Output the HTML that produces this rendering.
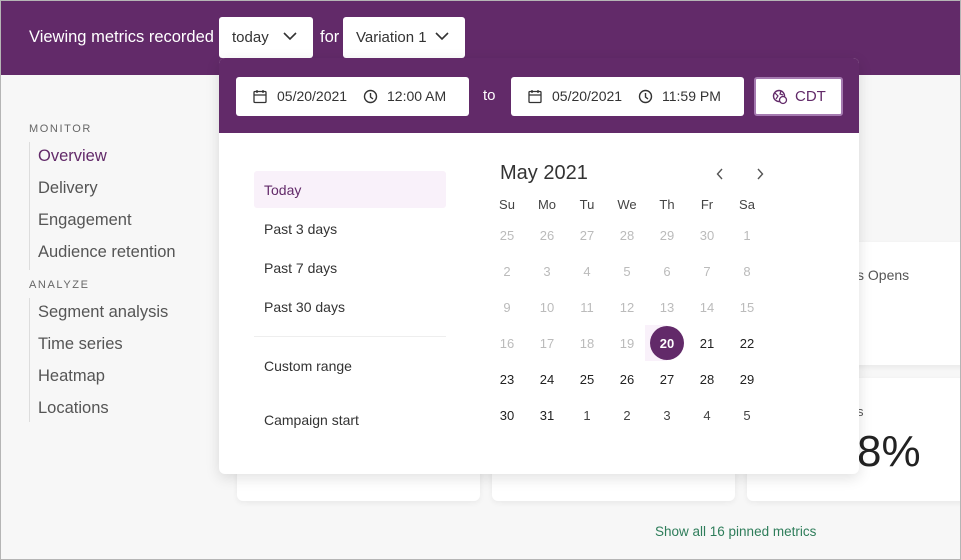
<!DOCTYPE html>
<html><head><style>
*{box-sizing:border-box;margin:0;padding:0}
body{width:961px;height:560px;overflow:hidden;font-family:"Liberation Sans",sans-serif;background:#f7f7f7;position:relative;color:#222}
.frame{position:absolute;inset:0;border:1px solid #b5b5b5;z-index:20;pointer-events:none}
.top{position:absolute;left:0;top:0;width:961px;height:75px;background:#622a69}
.abs{position:absolute}
.t{font-size:16.5px;color:#fff}
.sel{position:absolute;background:#fff;border-radius:3px;height:41px;top:17px;font-size:15px;color:#333;display:flex;align-items:center;padding-left:13px}
.sel svg{position:absolute;right:16px;top:15px}
.side .h{position:absolute;left:29px;font-size:11px;letter-spacing:1.6px;color:#666}
.side .g{position:absolute;left:29px;border-left:1px solid #ddd}
.side .i{position:absolute;left:38px;font-size:16.5px;color:#555}
.card{position:absolute;background:#fff;border-radius:6px;box-shadow:0 2px 6px rgba(0,0,0,.06)}
.pop{position:absolute;left:219px;top:58px;width:640px;height:416px;background:#fff;border-radius:6px;box-shadow:0 4px 14px rgba(0,0,0,.12);overflow:hidden}
.pp{position:absolute;left:0;top:0;width:640px;height:75px;background:#622a69}
.dbox{position:absolute;top:19px;height:39px;background:#fff;border-radius:3px;font-size:14px;color:#333}
.dbox span{position:absolute;top:11px}
.li{position:absolute;left:45px;font-size:14px;color:#333}
.d{position:absolute;width:36px;text-align:center;font-size:13px;color:#222}
.g2{color:#bbb}
.wd{position:absolute;width:36px;text-align:center;font-size:13px;color:#444;top:139px}
</style></head><body>
<div class="top"></div>
<div class="abs t" style="left:29px;top:28px">Viewing metrics recorded</div>
<div class="sel" style="left:219px;width:94px">today<svg width="14" height="9" viewBox="0 0 14 9"><path d="M1 1l6 6 6-6" fill="none" stroke="#333" stroke-width="1.6"/></svg></div>
<div class="abs t" style="left:320px;top:28px">for</div>
<div class="sel" style="left:343px;width:122px">Variation 1<svg width="14" height="9" viewBox="0 0 14 9"><path d="M1 1l6 6 6-6" fill="none" stroke="#333" stroke-width="1.6"/></svg></div>

<div class="side">
<div class="h" style="top:123px">MONITOR</div>
<div class="g" style="top:142px;height:128px"></div>
<div class="i" style="top:147px;color:#622a69">Overview</div>
<div class="i" style="top:179px">Delivery</div>
<div class="i" style="top:211px">Engagement</div>
<div class="i" style="top:243px">Audience retention</div>
<div class="h" style="top:279px">ANALYZE</div>
<div class="g" style="top:298px;height:124px"></div>
<div class="i" style="top:303px">Segment analysis</div>
<div class="i" style="top:335px">Time series</div>
<div class="i" style="top:367px">Heatmap</div>
<div class="i" style="top:399px">Locations</div>
</div>

<div class="card" style="left:747px;top:242px;width:230px;height:123px"></div>
<div class="abs" style="left:857px;top:267px;font-size:14px;color:#555">s Opens</div>
<div class="card" style="left:747px;top:378px;width:230px;height:123px"></div>
<div class="abs" style="left:857px;top:404px;font-size:13px;color:#555">s</div>
<div class="abs" style="left:857px;top:427px;font-size:44px;color:#222">8%</div>
<div class="card" style="left:237px;top:300px;width:243px;height:201px"></div>
<div class="card" style="left:492px;top:300px;width:243px;height:201px"></div>
<div class="abs" style="left:655px;top:524px;font-size:13.5px;color:#2e7d5a">Show all 16 pinned metrics</div>

<div class="pop">
<div class="pp"></div>
<div class="dbox" style="left:17px;width:233px">
<svg class="abs" style="left:17px;top:12px" width="14" height="15" viewBox="0 0 14 15"><rect x="1" y="2.5" width="12" height="11" rx="1" fill="none" stroke="#333" stroke-width="1.3"/><path d="M1 6h12M4 1v3M10 1v3" stroke="#333" stroke-width="1.3"/></svg>
<span style="left:41px">05/20/2021</span>
<svg class="abs" style="left:127px;top:12px" width="15" height="15" viewBox="0 0 15 15"><circle cx="7.5" cy="7.5" r="6" fill="none" stroke="#333" stroke-width="1.4"/><path d="M7.5 4v4l2.5 2" fill="none" stroke="#333" stroke-width="1.4"/></svg>
<span style="left:151px">12:00 AM</span></div>
<div class="abs t" style="left:264px;top:29px;font-size:15px">to</div>
<div class="dbox" style="left:292px;width:233px">
<svg class="abs" style="left:17px;top:12px" width="14" height="15" viewBox="0 0 14 15"><rect x="1" y="2.5" width="12" height="11" rx="1" fill="none" stroke="#333" stroke-width="1.3"/><path d="M1 6h12M4 1v3M10 1v3" stroke="#333" stroke-width="1.3"/></svg>
<span style="left:41px">05/20/2021</span>
<svg class="abs" style="left:127px;top:12px" width="15" height="15" viewBox="0 0 15 15"><circle cx="7.5" cy="7.5" r="6" fill="none" stroke="#333" stroke-width="1.4"/><path d="M7.5 4v4l2.5 2" fill="none" stroke="#333" stroke-width="1.4"/></svg>
<span style="left:151px">11:59 PM</span></div>
<div class="dbox" style="left:535px;width:89px;border:2px solid #a57ab0;color:#622a69">
<svg class="abs" style="left:16px;top:10px" width="16" height="16" viewBox="0 0 16 16"><circle cx="7" cy="7" r="5.5" fill="none" stroke="#622a69" stroke-width="1.4"/><path d="M3 4l3 3-2 3M9 2l-1 3 3 1" fill="none" stroke="#622a69" stroke-width="1.2"/><circle cx="11" cy="11" r="3.5" fill="#fff" stroke="#622a69" stroke-width="1.3"/></svg>
<span style="left:39px;top:9px;font-size:15px">CDT</span></div>

<div class="abs" style="left:35px;top:113px;width:192px;height:37px;background:#f9f1fa;border-radius:3px"></div>
<div class="li" style="top:124px;color:#622a69">Today</div>
<div class="li" style="top:163px">Past 3 days</div>
<div class="li" style="top:202px">Past 7 days</div>
<div class="li" style="top:241px">Past 30 days</div>
<div class="abs" style="left:35px;top:278px;width:192px;height:1px;background:#eee"></div>
<div class="li" style="top:300px">Custom range</div>
<div class="li" style="top:354px">Campaign start</div>

<div class="abs" style="left:281px;top:104px;font-size:20px;color:#333">May 2021</div>
<svg class="abs" style="left:497px;top:110px" width="8" height="12" viewBox="0 0 8 12"><path d="M6 1L1.5 6 6 11" fill="none" stroke="#555" stroke-width="1.4"/></svg>
<svg class="abs" style="left:537px;top:110px" width="8" height="12" viewBox="0 0 8 12"><path d="M2 1l4.5 5L2 11" fill="none" stroke="#555" stroke-width="1.4"/></svg>

<div class="wd" style="left:270px">Su</div><div class="wd" style="left:310px">Mo</div><div class="wd" style="left:350px">Tu</div><div class="wd" style="left:390px">We</div><div class="wd" style="left:430px">Th</div><div class="wd" style="left:470px">Fr</div><div class="wd" style="left:510px">Sa</div>

<div class="abs" style="left:426px;top:267px;width:22px;height:36px;background:#f9f1fa"></div>
<div class="abs" style="left:431px;top:268px;width:34px;height:34px;border-radius:50%;background:#622a69"></div>

<div class="d g2" style="left:270px;top:170px">25</div><div class="d g2" style="left:310px;top:170px">26</div><div class="d g2" style="left:350px;top:170px">27</div><div class="d g2" style="left:390px;top:170px">28</div><div class="d g2" style="left:430px;top:170px">29</div><div class="d g2" style="left:470px;top:170px">30</div><div class="d g2" style="left:510px;top:170px">1</div>
<div class="d g2" style="left:270px;top:206px">2</div><div class="d g2" style="left:310px;top:206px">3</div><div class="d g2" style="left:350px;top:206px">4</div><div class="d g2" style="left:390px;top:206px">5</div><div class="d g2" style="left:430px;top:206px">6</div><div class="d g2" style="left:470px;top:206px">7</div><div class="d g2" style="left:510px;top:206px">8</div>
<div class="d g2" style="left:270px;top:242px">9</div><div class="d g2" style="left:310px;top:242px">10</div><div class="d g2" style="left:350px;top:242px">11</div><div class="d g2" style="left:390px;top:242px">12</div><div class="d g2" style="left:430px;top:242px">13</div><div class="d g2" style="left:470px;top:242px">14</div><div class="d g2" style="left:510px;top:242px">15</div>
<div class="d g2" style="left:270px;top:278px">16</div><div class="d g2" style="left:310px;top:278px">17</div><div class="d g2" style="left:350px;top:278px">18</div><div class="d g2" style="left:390px;top:278px">19</div><div class="d" style="left:430px;top:278px;color:#fff;font-weight:bold">20</div><div class="d" style="left:470px;top:278px">21</div><div class="d" style="left:510px;top:278px">22</div>
<div class="d" style="left:270px;top:314px">23</div><div class="d" style="left:310px;top:314px">24</div><div class="d" style="left:350px;top:314px">25</div><div class="d" style="left:390px;top:314px">26</div><div class="d" style="left:430px;top:314px">27</div><div class="d" style="left:470px;top:314px">28</div><div class="d" style="left:510px;top:314px">29</div>
<div class="d" style="left:270px;top:350px">30</div><div class="d" style="left:310px;top:350px">31</div><div class="d" style="left:350px;top:350px;color:#444">1</div><div class="d" style="left:390px;top:350px;color:#444">2</div><div class="d" style="left:430px;top:350px;color:#444">3</div><div class="d" style="left:470px;top:350px;color:#444">4</div><div class="d" style="left:510px;top:350px;color:#444">5</div>
</div>
<div class="frame"></div>
</body></html>
